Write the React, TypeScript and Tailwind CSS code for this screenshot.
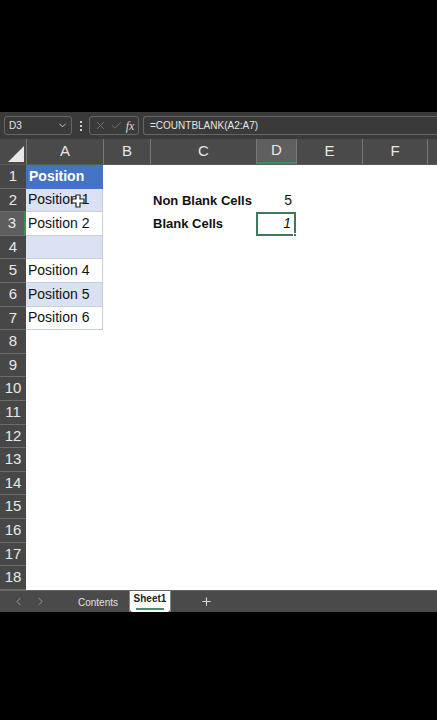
import { ChevronDown, ChevronLeft, ChevronRight, X, Check, Plus } from 'lucide-react';

const cols = [
  { key: 'A', w: 'w-[77px]' },
  { key: 'B', w: 'w-[47px]' },
  { key: 'C', w: 'w-[106px]' },
  { key: 'D', w: 'w-[40px]' },
  { key: 'E', w: 'w-[66px]' },
  { key: 'F', w: 'w-[65px]' },
];

const positions: Record<number, string> = {
  2: 'Position 1',
  3: 'Position 2',
  4: '',
  5: 'Position 4',
  6: 'Position 5',
  7: 'Position 6',
};

function CellCursor() {
  return (
    <svg className="absolute left-[45px] top-[5px] w-[14px] h-[14px]" viewBox="0 0 14 14">
      <path
        d="M5 1h4v4h4v4H9v4H5V9H1V5h4z"
        fill="#ffffff"
        stroke="#222222"
        strokeWidth="1.2"
      />
    </svg>
  );
}

function ColumnA({ row }: { row: number }) {
  if (row === 1) {
    return (
      <div className="w-[77px] h-full bg-[#4472c4] flex items-center pl-[3px] text-white font-bold text-[14px]">
        Position
      </div>
    );
  }
  if (row > 7) return <div className="w-[77px] h-full" />;
  const shaded = row % 2 === 0;
  return (
    <div
      className={`relative w-[77px] h-full flex items-center pl-[2px] text-[14px] text-[#111] border-r border-b border-[#c9cfd8] ${
        shaded ? 'bg-[#d9e1f2]' : 'bg-white'
      }`}
    >
      {positions[row]}
      {row === 2 && <CellCursor />}
    </div>
  );
}

function SheetRow({ row }: { row: number }) {
  const active = row === 3;
  return (
    <div className="flex h-[23.6px]">
      <div
        className={`w-[26px] h-full flex items-center justify-center text-[15px] text-[#e8e8e8] border-b border-[#6d6d6d] ${
          active ? 'bg-[#5e5e5e] border-r-2 border-r-[#3f8a5f]' : 'bg-[#474747]'
        }`}
      >
        {row}
      </div>
      <ColumnA row={row} />
      <div className="w-[47px] h-full" />
      <div className="w-[106px] h-full flex items-center pl-[3px] text-[13px] font-bold text-[#111]">
        {row === 2 && 'Non Blank Cells'}
        {row === 3 && 'Blank Cells'}
      </div>
      {row === 3 ? (
        <div className="relative w-[40px] h-full border-2 border-[#3d7a5a] flex items-center justify-end pr-[3px] text-[14px] italic text-[#111]">
          1
          <span className="absolute -right-[3px] -bottom-[3px] w-[4px] h-[4px] bg-[#3d7a5a] border border-white" />
        </div>
      ) : (
        <div className="w-[40px] h-full flex items-center justify-end pr-[4px] text-[14px] text-[#111]">
          {row === 2 && '5'}
        </div>
      )}
      <div className="w-[66px] h-full" />
      <div className="w-[65px] h-full" />
      <div className="flex-1 h-full" />
    </div>
  );
}

export default function App() {
  const rows = Array.from({ length: 18 }, (_, i) => i + 1);

  return (
    <div className="w-[437px] h-[720px] bg-black flex flex-col overflow-hidden font-['Liberation_Sans',Arial,sans-serif]">
      <div className="h-[112px] shrink-0" />

      {/* Formula bar */}
      <div className="h-[27px] shrink-0 bg-[#3a3a3a] flex items-center gap-[4px] pl-[4px]">
        <div className="w-[68px] h-[19px] rounded-[3px] border border-[#666] flex items-center justify-between pl-[4px] pr-[3px]">
          <span className="text-[10px] text-[#e6e6e6]">D3</span>
          <ChevronDown className="w-[11px] h-[11px] text-[#cfcfcf]" strokeWidth={2} />
        </div>
        <div className="w-[9px] flex flex-col items-center gap-[2px]">
          <span className="w-[2px] h-[2px] bg-[#cfcfcf]" />
          <span className="w-[2px] h-[2px] bg-[#cfcfcf]" />
          <span className="w-[2px] h-[2px] bg-[#cfcfcf]" />
        </div>
        <div className="w-[50px] h-[19px] rounded-[3px] border border-[#666] flex items-center justify-around px-[2px]">
          <X className="w-[13px] h-[13px] text-[#7a7a7a]" strokeWidth={1.5} />
          <Check className="w-[13px] h-[13px] text-[#7a7a7a]" strokeWidth={1.5} />
          <span className="text-[12px] italic text-[#dcdcdc] font-['Liberation_Serif',serif] leading-none">
            fx
          </span>
        </div>
        <div className="flex-1 h-[19px] rounded-l-[3px] border border-r-0 border-[#666] flex items-center pl-[6px] text-[10px] text-[#e6e6e6]">
          =COUNTBLANK(A2:A7)
        </div>
      </div>

      {/* Column headers */}
      <div className="h-[26px] shrink-0 flex bg-[#4a4a4a] border-b border-[#5a5a5a]">
        <div className="w-[26px] h-full relative">
          <svg className="absolute left-[8px] top-[7px] w-[16px] h-[16px]" viewBox="0 0 16 16">
            <path d="M16 0V16H0z" fill="#e8e8e8" />
          </svg>
        </div>
        {cols.map(c => (
          <div
            key={c.key}
            className={`${c.w} h-full flex items-center justify-center text-[15px] text-[#e8e8e8] border-l border-[#777] ${
              c.key === 'D' ? 'bg-[#5f5f5f] border-b-2 border-b-[#3f8a5f]' : ''
            }`}
          >
            {c.key}
          </div>
        ))}
        <div className="flex-1 h-full border-l border-[#777]" />
      </div>

      {/* Grid */}
      <div className="shrink-0 bg-white flex flex-col">
        {rows.map(r => (
          <SheetRow key={r} row={r} />
        ))}
      </div>

      {/* Sheet tabs */}
      <div className="h-[22px] shrink-0 bg-[#4a4a4a] border-t border-[#666] flex items-stretch">
        <div className="w-[60px] flex items-center gap-[9px] pl-[12px]">
          <ChevronLeft className="w-[13px] h-[13px] text-[#a8a8a8]" strokeWidth={1.5} />
          <ChevronRight className="w-[13px] h-[13px] text-[#a8a8a8]" strokeWidth={1.5} />
        </div>
        <div className="w-[70px] flex items-center justify-end pr-[11px] pt-[2px] text-[10px] text-[#e0e0e0] border-r border-[#888]">
          Contents
        </div>
        <div className="w-[40px] bg-white rounded-b-[3px] flex flex-col items-center justify-center pt-[2px]">
          <span className="text-[10px] text-[#222] font-semibold leading-none">Sheet1</span>
          <span className="mt-[4px] w-[28px] h-[2px] bg-[#4f8a70]" />
        </div>
        <div className="w-[1px] bg-[#888]" />
        <div className="w-[70px] flex items-center justify-center">
          <Plus className="w-[13px] h-[13px] text-[#d8d8d8]" strokeWidth={2} />
        </div>
      </div>

      <div className="flex-1" />
    </div>
  );
}
